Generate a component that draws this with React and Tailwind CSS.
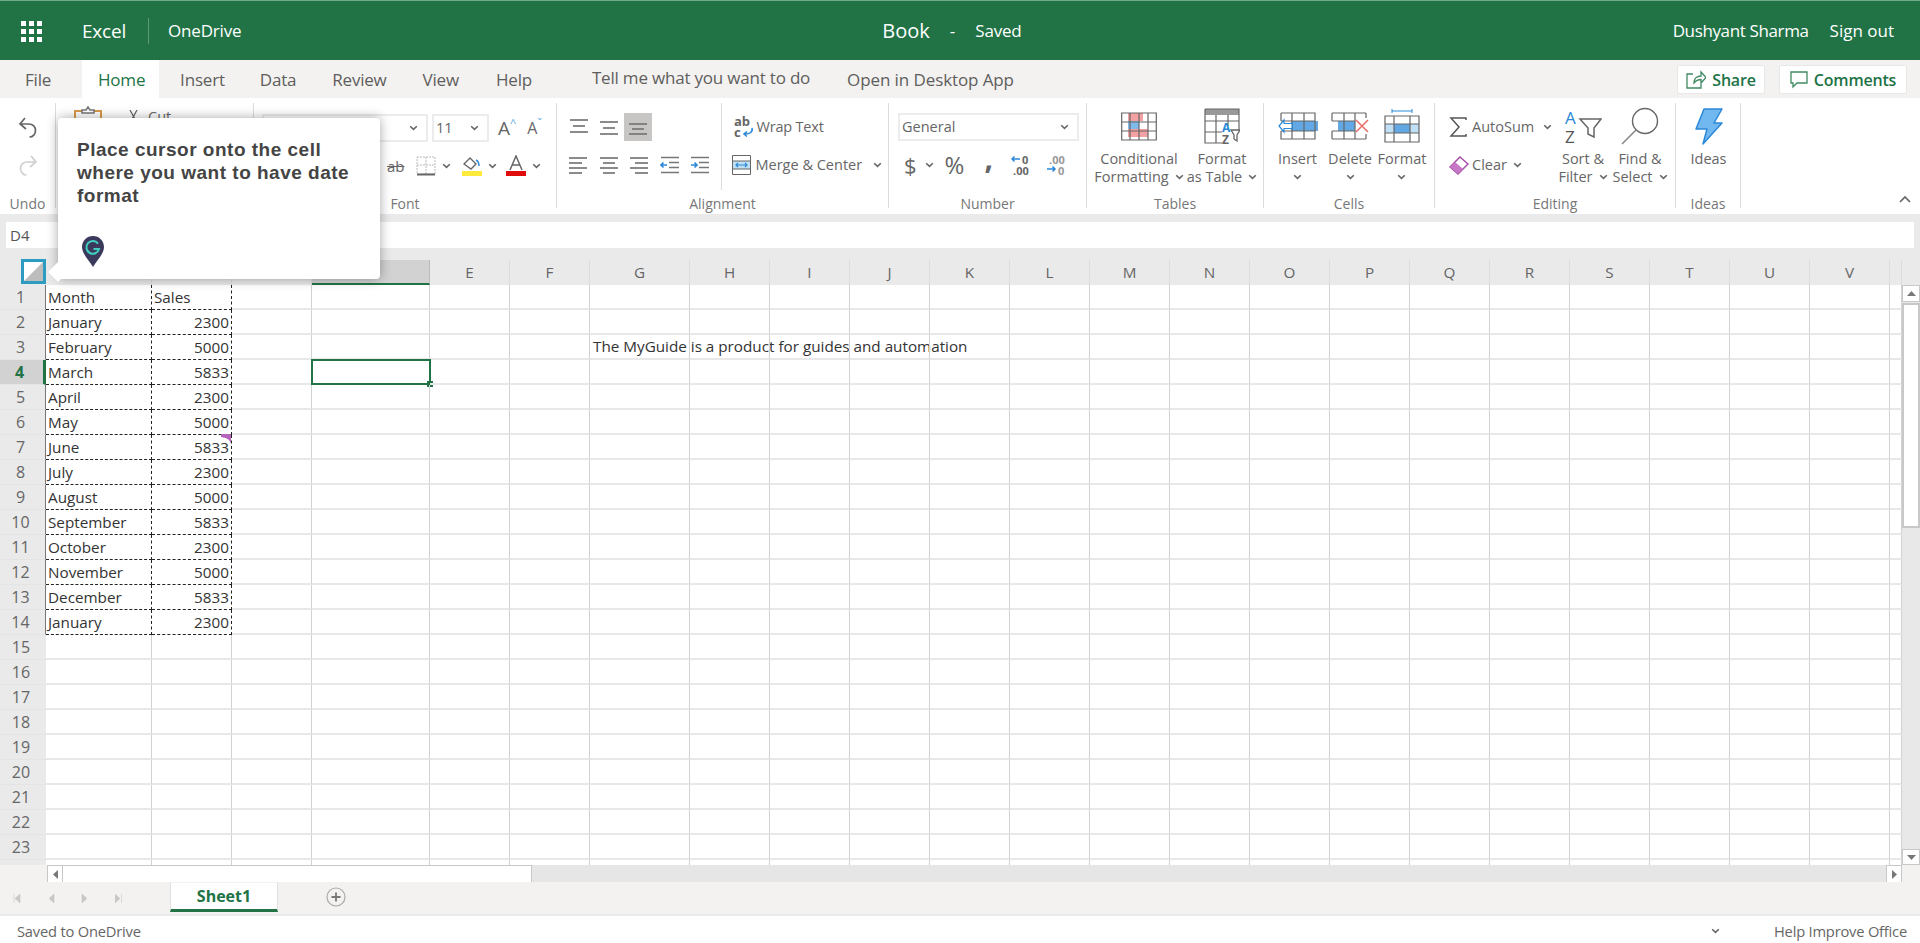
import React from "react";

const cols = [
  ["A", 106], ["B", 80], ["C", 80], ["D", 118], ["E", 80], ["F", 80], ["G", 100], ["H", 80], ["I", 80], ["J", 80], ["K", 80],
  ["L", 80], ["M", 80], ["N", 80], ["O", 80], ["P", 80], ["Q", 80], ["R", 80], ["S", 80], ["T", 80], ["U", 80], ["V", 80], ["W", 12],
];

const sales = [
  ["Month", "Sales"], ["January", "2300"], ["February", "5000"], ["March", "5833"], ["April", "2300"], ["May", "5000"], ["June", "5833"],
  ["July", "2300"], ["August", "5000"], ["September", "5833"], ["October", "2300"], ["November", "5000"], ["December", "5833"], ["January", "2300"],
];

const Chevron = ({ className = "" }) => (
  <svg width="9" height="6" viewBox="0 0 9 6" className={className}>
    <path d="M1.2 1.2 4.5 4.4 7.8 1.2" fill="none" stroke="#666" strokeWidth="1.6" />
  </svg>
);

const Lines = ({ widths }) => (
  <svg width="20" height="18" viewBox="0 0 20 18" stroke="#777" strokeWidth="1.7">
    {widths.map((l, i) => <path key={i} d={`M${l[0]} ${l[1]}H${l[2]}`} />)}
  </svg>
);

const Indent = ({ flip }) => (
  <svg width="20" height="18" viewBox="0 0 20 18" fill="none">
    <path d="M1 1.5H19M9 6.5H19M9 11.5H19M1 16.5H19" stroke="#777" strokeWidth="1.7" />
    {flip
      ? <path d="M1 9H7M4.5 6.5 7 9 4.5 11.5" stroke="#2b88d8" strokeWidth="1.6" />
      : <path d="M7 9H1M3.5 6.5 1 9 3.5 11.5" stroke="#2b88d8" strokeWidth="1.6" />}
  </svg>
);

const TableGrid = ({ w = 36, h = 27, children }) => (
  <svg width={w} height={h + 8} viewBox={`0 0 ${w} ${h + 8}`} fill="none">
    {children}
  </svg>
);

const LargeBtn = ({ w, icon, lines, chevron }) => (
  <div className="flex flex-col items-center" style={{ width: w }}>
    <div className="h-[40px] mt-[3px] flex items-center justify-center">{icon}</div>
    <div className="mt-[4px] text-[14.5px] leading-[18px] text-[#666] text-center whitespace-nowrap">
      <div>{lines[0]}</div>
      <div className="flex items-center justify-center gap-[6px] h-[18px]">
        {lines[1] && <span>{lines[1]}</span>}
        {chevron && <Chevron />}
      </div>
    </div>
  </div>
);

const Group = ({ w, label, children, last }) => (
  <div className={`flex flex-col h-[105px] mt-[5px] ${last ? "" : "border-r border-[#dcdcdc]"}`} style={{ width: w }}>
    <div className="flex-1 min-h-0">{children}</div>
    <div className="h-[20px] -mb-[6px] text-[14px] leading-[20px] text-[#777] text-center">{label}</div>
  </div>
);

const SelectBox = ({ className, text }) => (
  <div className={`h-[28px] border-2 border-[#ececec] flex items-center justify-between pl-[2px] pr-[8px] text-[14.5px] text-[#666] ${className}`}>
    <span>{text}</span>
    <Chevron />
  </div>
);

const TooltipPin = () => (
  <svg width="22" height="31" viewBox="0 0 22 31">
    <path d="M11 0C4.9 0 0 4.9 0 11c0 7.2 7.8 14 11 20 3.200-6 11-12.800 11-20C22 4.900 17.100 0 11 0Z" fill="#3b3a5c" />
    <path d="M16 7.600A6.400 6.400 0 1 0 17 13H11.500" fill="none" stroke="#3fd0c0" strokeWidth="2" />
  </svg>
);

function Ribbon() {
  return (
    <div className="h-[116px] bg-white flex">
      <Group w={56} label="Undo">
        <div className="flex flex-col items-center pt-[13px] gap-[14px]">
          <svg width="20" height="24" viewBox="0 0 20 24" fill="none" stroke="#666" strokeWidth="1.700">
            <path d="M7 2 2 8l6 5M2 8h9c4 0 6.500 3 6.500 6.500S15 21 11.500 21" />
          </svg>
          <svg width="20" height="24" viewBox="0 0 20 24" fill="none" stroke="#d0d0d0" strokeWidth="1.700">
            <path d="M13 2l5 6-6 5M18 8H9c-4 0-6.500 3-6.500 6.500S5 21 8.500 21" />
          </svg>
        </div>
      </Group>
      <Group w={198} label="Clipboard">
        <div className="flex items-start pl-[18px] pt-[3px] gap-[26px]">
          <svg width="28" height="24" viewBox="0 0 28 24" fill="none">
            <rect x="1" y="5" width="26" height="19" stroke="#d99a4a" strokeWidth="2" />
            <path d="M8 7V4h4l2-3 2 3h4v3Z" fill="#fff" stroke="#777" strokeWidth="1.500" />
          </svg>
          <div className="flex items-center gap-[9px] text-[14.5px] text-[#666]">
            <svg width="11" height="14" viewBox="0 0 11 14" fill="none" stroke="#666" strokeWidth="1.300"><path d="M2 0 8 11M9 0 3 11" /></svg>
            <span>Cut</span>
          </div>
        </div>
      </Group>
      <Group w={303} label="Font">
        <div className="pt-[11px] flex items-center">
          <SelectBox className="w-[166px] ml-[8px]" text="" />
          <SelectBox className="w-[57px] ml-[4px]" text="11" />
          <div className="ml-[9px] text-[19px] leading-[20px] text-[#666] flex items-start">A<span className="text-[11px] leading-[10px] text-[#5aa9dd]">^</span></div>
          <div className="ml-[11px] text-[16px] leading-[20px] text-[#666] flex items-start">A<span className="text-[11px] leading-[10px] text-[#5aa9dd]">ˇ</span></div>
        </div>
        <div className="mt-[10px] flex items-center h-[28px] pl-[133px]">
          <span className="text-[15px] text-[#666] line-through">ab</span>
          <svg className="ml-[11px]" width="20" height="20" viewBox="0 0 20 20" fill="none">
            <path d="M1 1H19V18H1ZM10 1V18M1 9H19" stroke="#bbb" strokeDasharray="2 1" />
            <path d="M1 18.500H19" stroke="#666" strokeWidth="2" />
          </svg>
          <Chevron className="ml-[6px]" />
          <svg className="ml-[10px]" width="22" height="22" viewBox="0 0 22 22" fill="none">
            <path d="M3 9 9 3l6 6-5 5Z" stroke="#666" strokeWidth="1.400" />
            <path d="M15 5c2 1 3 3 3 6" stroke="#2b88d8" strokeWidth="1.500" />
            <rect x="1" y="16" width="20" height="5" fill="#ffeb3b" />
          </svg>
          <Chevron className="ml-[5px]" />
          <svg className="ml-[8px]" width="22" height="22" viewBox="0 0 22 22" fill="none">
            <path d="M5 15 11 1l6 14M7.500 10H14.500" stroke="#666" strokeWidth="1.500" />
            <rect x="1" y="16" width="20" height="5" fill="#e00c0c" />
          </svg>
          <Chevron className="ml-[5px]" />
        </div>
      </Group>
      <Group w={332} label="Alignment">
        <div className="flex h-[87px]">
          <div className="w-[164px]">
            <div className="flex items-center h-[28px] mt-[10px] pl-[12px] gap-[10px]">
              <Lines widths={[[1, 2, 19], [4, 8, 16], [1, 14, 19]]} />
              <Lines widths={[[1, 4, 19], [4, 10, 16], [1, 16, 19]]} />
              <div className="w-[28px] h-[28px] -ml-[5px] bg-[#c8c6c4] flex items-center justify-center">
                <Lines widths={[[1, 6, 19], [4, 11, 16], [1, 16, 19]]} />
              </div>
            </div>
            <div className="flex items-center h-[28px] mt-[10px] pl-[11px] gap-[10.5px]">
              <Lines widths={[[1, 2, 19], [1, 7, 14], [1, 12, 19], [1, 17, 14]]} />
              <Lines widths={[[1, 2, 19], [4, 7, 16], [1, 12, 19], [4, 17, 16]]} />
              <Lines widths={[[1, 2, 19], [6, 7, 19], [1, 12, 19], [6, 17, 19]]} />
              <Indent />
              <Indent flip />
            </div>
          </div>
          <div className="w-[168px] border-l border-[#dcdcdc]">
            <div className="flex items-center h-[28px] mt-[10px] pl-[12px] gap-[3px] text-[14.5px] tracking-[-0.2px] text-[#666]">
              <svg width="20" height="22" viewBox="0 0 20 22" fill="none">
                <text x="0" y="10" fontSize="13" fontWeight="700" fill="#666" fontFamily="Open Sans, sans-serif">ab</text>
                <text x="0" y="21" fontSize="13" fontWeight="700" fill="#666" fontFamily="Open Sans, sans-serif">c</text>
                <path d="M18 12c1 4-2 6-7 6M13 15.500 10 18l3 2.500" stroke="#2b88d8" strokeWidth="1.600" />
              </svg>
              <span>Wrap Text</span>
            </div>
            <div className="flex items-center h-[28px] mt-[10px] pl-[10px] gap-[5px] text-[14.5px] text-[#666] whitespace-nowrap">
              <svg width="19" height="20" viewBox="0 0 19 20" fill="none">
                <path d="M.5 .5H18.500V19.500H.5Z" stroke="#666" />
                <rect x="1" y="6" width="17" height="8" fill="#bfe0f5" />
                <path d="M1 6H18M1 14H18" stroke="#666" />
                <path d="M4 10H15M6 8 4 10l2 2M13 8l2 2-2 2" stroke="#2b88d8" strokeWidth="1.200" />
              </svg>
              <span>Merge &amp; Center</span>
              <Chevron className="ml-[6px]" />
            </div>
          </div>
        </div>
      </Group>
      <Group w={198} label="Number">
        <SelectBox className="w-[181px] ml-[9px] mt-[10px]" text="General" />
        <div className="flex items-center h-[28px] mt-[10px] pl-[15px] text-[#666]">
          <span className="text-[22px] leading-[28px]">$</span>
          <Chevron className="ml-[8px]" />
          <span className="ml-[11px] text-[24px] leading-[28px]">%</span>
          <span className="ml-[20px] h-[28px] text-[30px] font-bold leading-[28px] -mt-[14px]">,</span>
          <svg className="ml-[18px]" width="21" height="22" viewBox="0 0 21 22" fill="none" fontFamily="Open Sans, sans-serif">
            <path d="M9 5H1M3.500 2.500 1 5l2.500 2.500" stroke="#2b88d8" strokeWidth="1.500" />
            <text x="11" y="10" fontSize="11" fill="#666" fontWeight="700">0</text>
            <text x="2" y="21" fontSize="11" fill="#666" fontWeight="700">.00</text>
          </svg>
          <svg className="ml-[14px]" width="21" height="22" viewBox="0 0 21 22" fill="none" fontFamily="Open Sans, sans-serif">
            <text x="3" y="10" fontSize="11" fill="#999" fontWeight="700">.00</text>
            <path d="M1 15H9M6.500 12.500 9 15l-2.500 2.500" stroke="#2b88d8" strokeWidth="1.500" />
            <text x="12" y="21" fontSize="11" fill="#999" fontWeight="700">0</text>
          </svg>
        </div>
      </Group>
      <Group w={177} label="Tables">
        <div className="flex pl-[2px]">
          <LargeBtn w={100} chevron lines={["Conditional", "Formatting"]} icon={
            <TableGrid>
              <rect x="7" y="4" width="15" height="8" fill="#f4a1a3" />
              <rect x="7" y="12" width="11" height="8" fill="#7fbaea" />
              <rect x="7" y="20" width="20" height="8" fill="#f4a1a3" />
              <path d="M.7 4H35.300V31H.7ZM.7 13H35.300M.7 22H35.300M9 4V31M18 4V31M27 4V31" stroke="#666" strokeWidth="1.200" />
            </TableGrid>
          } />
          <LargeBtn w={66} chevron lines={["Format", "as Table"]} icon={
            <svg width="36" height="36" viewBox="0 0 36 36" fill="none">
              <rect x="1" y="1" width="34" height="6" fill="#999" />
              <path d="M1 1H35V22M1 1V35H18M12 7V35M24 7V18M1 13H35M1 24H18" stroke="#666" strokeWidth="1.200" />
              <text x="18" y="24" fontSize="12" fontWeight="700" fill="#2b88d8">A</text>
              <text x="18" y="36" fontSize="12" fontWeight="700" fill="#666">Z</text>
              <path d="M27 22H36L33 27V33L30 31V27Z" fill="#fff" stroke="#666" strokeWidth="1.300" />
            </svg>
          } />
        </div>
      </Group>
      <Group w={171} label="Cells">
        <div className="flex pl-[7px]">
          <LargeBtn w={53} chevron lines={["Insert"]} icon={
            <svg width="40" height="28" viewBox="0 0 40 28" fill="none">
              <rect x="13" y="9" width="27" height="10" fill="#62a8e5" />
              <path d="M3 1H37V27H3V19M3 9V1M3 9H37M3 19H37M14 1V27M26 1V27" stroke="#666" strokeWidth="1.200" />
              <path d="M14 11.500H6V8L1 14l5 6v-3.500H14Z" fill="#fff" stroke="#2b88d8" strokeWidth="1.200" />
            </svg>
          } />
          <LargeBtn w={52} chevron lines={["Delete"]} icon={
            <svg width="38" height="28" viewBox="0 0 38 28" fill="none">
              <rect x="7" y="9" width="17" height="10" fill="#62a8e5" />
              <path d="M1 1H35M1 27H35M1 9H24M1 19H24M1 1V9M1 19V27M35 1V6M35 22V27M13 1V27M24 1V27" stroke="#666" strokeWidth="1.200" />
              <path d="M25 8 37 20M37 8 25 20" stroke="#e8716e" strokeWidth="1.600" />
            </svg>
          } />
          <LargeBtn w={52} chevron lines={["Format"]} icon={
            <svg width="36" height="34" viewBox="0 0 36 34" fill="none">
              <path d="M8 2H28M8 0V4M28 0V4" stroke="#2b88d8" />
              <rect x="1" y="15" width="34" height="9" fill="#bfe0f5" />
              <rect x="10" y="15" width="16" height="9" fill="#62a8e5" />
              <path d="M1 7H35V33H1ZM1 15H35M1 24H35M10 7V33M26 7V33" stroke="#666" strokeWidth="1.200" />
            </svg>
          } />
        </div>
      </Group>
      <Group w={241} label="Editing">
        <div className="flex">
          <div className="w-[118px] pl-[14px] text-[14.5px] text-[#666]">
            <div className="flex items-center h-[28px] mt-[10px]">
              <svg width="18" height="20" viewBox="0 0 18 20" fill="none"><path d="M17 3V1H2L10 10 2 19H17V17" stroke="#555" strokeWidth="1.500" /></svg>
              <span className="ml-[5px]">AutoSum</span>
              <Chevron className="ml-[9px]" />
            </div>
            <div className="flex items-center h-[28px] mt-[10px]">
              <svg width="20" height="20" viewBox="0 0 20 20"><path d="M1 12 11 2l8 7-10 10Z" fill="#fff" stroke="#a64ea6" strokeWidth="1.500" /><path d="M1 12l5-5 8 7-5 5Z" fill="#c678c6" /></svg>
              <span className="ml-[3px]">Clear</span>
              <Chevron className="ml-[6px]" />
            </div>
          </div>
          <LargeBtn w={60} chevron lines={["Sort &", "Filter"]} icon={
            <svg width="37" height="35" viewBox="0 0 37 35" fill="none">
              <text x="0" y="15" fontSize="17" fill="#2b88d8" fontFamily="Open Sans, sans-serif">A</text>
              <text x="0" y="34" fontSize="17" fill="#555" fontFamily="Open Sans, sans-serif">Z</text>
              <path d="M15 10H36L29 19V28L23 25V19Z" stroke="#666" strokeWidth="1.500" />
            </svg>
          } />
          <LargeBtn w={54} chevron lines={["Find &", "Select"]} icon={
            <svg width="38" height="38" viewBox="0 0 38 38" fill="none">
              <circle cx="24" cy="14" r="12.500" stroke="#666" strokeWidth="1.400" />
              <path d="M15 23 1 37" stroke="#888" strokeWidth="1.600" />
            </svg>
          } />
        </div>
      </Group>
      <Group w={65} label="Ideas">
        <LargeBtn w={65} lines={["Ideas"]} icon={
          <svg width="28" height="37" viewBox="0 0 28 37">
            <path d="M9 1H27L19 15H27L8 36 12 21H1Z" fill="#71b7f0" stroke="#2b88d8" strokeWidth="1.500" strokeLinejoin="round" />
          </svg>
        } />
      </Group>
      <div className="flex-1 flex items-end justify-end pr-[9px] pb-[11px]">
        <svg width="12" height="8" viewBox="0 0 12 8"><path d="M1 7 6 2l5 5" fill="none" stroke="#666" strokeWidth="1.700" /></svg>
      </div>
    </div>
  );
}

function Sheet() {
  const rows = Array.from({ length: 24 }, (_, i) => i);
  return (
    <div className="flex h-[580px] bg-white">
      <div className="w-[1902px] overflow-hidden">
        {rows.map((r) => (
          <div key={r} className="flex h-[25px]">
            <div className={`w-[46px] shrink-0 flex items-center justify-center pr-[4px] text-[16px] border-b border-[#e4e4e4] ${r === 3 ? "bg-[#d2d2d2] text-[#217346] font-bold border-r-[3px] border-r-[#217346]" : r < 14 ? "bg-[#eaeaea] text-[#666] border-r border-r-[#777]" : "bg-[#eaeaea] text-[#666]"}`}>
              {r + 1}
            </div>
            {cols.map(([letter, w], c) => {
              const dashed = r < 14 && c < 2;
              const row = sales[r];
              return (
                <div
                  key={letter}
                  className={`relative shrink-0 flex items-center text-[15.25px] text-[#333] whitespace-nowrap ${dashed ? "border-b border-r border-dashed border-[#222]" : "border-b-2 border-b-[#e8e8e8] border-r border-r-[#d2d2d2]"}`}
                  style={{ width: w }}
                >
                  {dashed && c === 0 && <span className="pl-[2px]">{row[0]}</span>}
                  {dashed && c === 1 && r === 0 && <span className="pl-[2px]">{row[1]}</span>}
                  {dashed && c === 1 && r > 0 && <span className="ml-auto pr-[2px]">{row[1]}</span>}
                  {r === 2 && letter === "G" && <span className="pl-[3px]">The MyGuide is a product for guides and automation</span>}
                  {r === 3 && letter === "D" && (
                    <div className="absolute -left-[1px] -top-[1px] w-[120px] h-[26px] border-2 border-[#217346]">
                      <div className="absolute -right-[4px] -bottom-[4px] w-[6px] h-[6px] bg-[#217346]" />
                    </div>
                  )}
                  {r === 5 && letter === "B" && (
                    <svg className="absolute right-0 -bottom-[11px]" width="10" height="11" viewBox="0 0 10 11">
                      <path d="M0 0H10V10C9 5 5 4 0 3Z" fill="#b565bb" />
                    </svg>
                  )}
                </div>
              );
            })}
          </div>
        ))}
      </div>
      <div className="w-[18px] bg-[#e8e8e8] flex flex-col">
        <div className="h-[17px] bg-white border border-[#c8c8c8] flex items-center justify-center">
          <svg width="9" height="5" viewBox="0 0 9 5"><path d="M4.500 0 9 5H0Z" fill="#777" /></svg>
        </div>
        <div className="h-[225px] mt-[1px] bg-white border-2 border-[#c8c8c8]" />
        <div className="flex-1" />
        <div className="h-[16px] bg-white border border-[#c8c8c8] flex items-center justify-center">
          <svg width="9" height="5" viewBox="0 0 9 5"><path d="M4.500 5 9 0H0Z" fill="#777" /></svg>
        </div>
      </div>
    </div>
  );
}

export default function App() {
  return (
    <div className="relative w-[1920px] h-[943px] overflow-hidden bg-white flex flex-col font-['Open_Sans',sans-serif]">
      {/* title bar */}
      <div className="h-[60px] bg-[#217346] border-t border-[#6fa88a] flex items-center pt-[1px] text-white">
        <svg className="ml-[21px]" width="21" height="21" viewBox="0 0 21 21" fill="#fff">
          {[0, 8, 16].map((x) => [0, 8, 16].map((y) => <rect key={`${x}-${y}`} x={x} y={y} width="5" height="5" />))}
        </svg>
        <span className="ml-[40px] text-[19px] tracking-[-0.2px]">Excel</span>
        <div className="ml-[22px] w-px h-[26px] bg-[#5c9a78]" />
        <span className="ml-[19px] text-[17px] tracking-[-0.2px]">OneDrive</span>
        <span className="ml-[641px] text-[20px]">Book</span>
        <span className="ml-[20px] text-[17px]">-</span>
        <span className="ml-[20px] text-[17px] tracking-[-0.2px]">Saved</span>
        <span className="ml-auto text-[17px] tracking-[-0.37px]">Dushyant Sharma</span>
        <span className="ml-[21px] mr-[26px] text-[17px]">Sign out</span>
      </div>

      {/* tabs */}
      <div className="h-[38px] bg-[#f3f2f1] flex items-center text-[17px] tracking-[-0.2px] text-[#605e5c]">
        <span className="ml-[25px] pt-[2px]">File</span>
        <div className="ml-[31px] w-[77px] h-full pt-[2px] pl-[2px] bg-white text-[#217346] flex items-center justify-center">Home</div>
        <span className="ml-[21px] pt-[2px]">Insert</span>
        <span className="ml-[35px] pt-[2px]">Data</span>
        <span className="ml-[36px] pt-[2px]">Review</span>
        <span className="ml-[36px] pt-[2px]">View</span>
        <span className="ml-[37px] pt-[2px]">Help</span>
        <span className="ml-[60px] -mt-[2px]">Tell me what you want to do</span>
        <span className="ml-[37px] pt-[2px] tracking-[-0.1px]">Open in Desktop App</span>
        <div className="ml-auto mt-[1px] h-[29px] w-[88px] bg-white border border-[#e8e8e8] rounded-[2px] flex items-center justify-center gap-[6px] text-[#217346] font-semibold text-[16px]">
          <svg width="20" height="19" viewBox="0 0 20 19" fill="none" stroke="#3f8a63" strokeWidth="1.300">
            <path d="M7 4H1V18H15V11M8 13c0-5 3-7 7-7V2l5 5.500L15 13V9.500c-3 0-5 1-7 3.500Z" />
          </svg>
          Share
        </div>
        <div className="ml-[14px] mr-[13px] mt-[1px] h-[29px] w-[128px] bg-white border border-[#e8e8e8] rounded-[2px] flex items-center justify-center gap-[6px] text-[#217346] font-semibold text-[16px]">
          <svg width="18" height="18" viewBox="0 0 18 18" fill="none" stroke="#3f8a63" strokeWidth="1.300">
            <path d="M1 1H17V12H7L3 16V12H1Z" />
          </svg>
          Comments
        </div>
      </div>

      <Ribbon />

      {/* formula bar */}
      <div className="h-[46px] bg-[#eaeaea] pt-[8px] pl-[6px] pr-[6px]">
        <div className="h-[26px] bg-white flex items-center pl-[4px] text-[15px] text-[#555]">D4</div>
      </div>

      {/* column headers */}
      <div className="h-[25px] bg-[#eaeaea] flex">
        <div className="w-[46px] shrink-0 pl-[21px]">
          <div className="w-[25px] h-[25px] -mt-[1px] border-[3px] border-[#2d9cc0] bg-white">
            <svg width="19" height="19" viewBox="0 0 19 19" className="block"><path d="M19 0V19H0Z" fill="#bdbdbd" /></svg>
          </div>
        </div>
        {cols.map(([letter, w]) => (
          <div
            key={letter}
            className={`shrink-0 flex items-center justify-center text-[15.25px] text-[#666] border-r ${letter === "D" ? "bg-[#d2d2d2] border-b-2 border-b-[#217346] border-r-[#bbb]" : "border-r-[#dcdcdc]"}`}
            style={{ width: w }}
          >
            {letter === "W" ? "" : letter}
          </div>
        ))}
      </div>

      <Sheet />

      {/* horizontal scrollbar */}
      <div className="h-[17px] bg-[#f3f2f1] flex pl-[47px]">
        <div className="w-[16px] bg-white border-x border-t border-[#c8c8c8] flex items-center justify-center">
          <svg width="5" height="9" viewBox="0 0 5 9"><path d="M0 4.500 5 0V9Z" fill="#777" /></svg>
        </div>
        <div className="w-[469px] bg-white border-t border-r border-[#c8c8c8]" />
        <div className="w-[1354px] bg-[#e6e6e6]" />
        <div className="w-[16px] bg-white border-x border-t border-[#c8c8c8] flex items-center justify-center">
          <svg width="5" height="9" viewBox="0 0 5 9"><path d="M5 4.500 0 0V9Z" fill="#777" /></svg>
        </div>
      </div>

      {/* sheet tabs */}
      <div className="h-[32px] bg-[#f3f2f1] flex items-start">
        <div className="flex items-center h-full w-[170px] pl-[13px] gap-[26px]">
          {["M1 0V9M7 0 2 4.500 7 9Z", "M7 0 2 4.500 7 9Z", "M1 0 6 4.500 1 9Z", "M0 0 5 4.500 0 9ZM6.500 0V9"].map((d) => (
            <svg key={d} width="8" height="9" viewBox="0 0 8 9">
              <path d={d} fill="#c8c8c8" stroke="#c8c8c8" strokeWidth=".6" />
            </svg>
          ))}
        </div>
        <div className="w-[108px] h-[29px] mt-[1px] bg-white border-x border-[#e0e0e0] border-b-[3px] border-b-[#217346] flex items-center justify-center text-[16px] font-bold text-[#217346]">Sheet1</div>
        <svg className="ml-[48px] mt-[5px]" width="20" height="20" viewBox="0 0 20 20" fill="none">
          <circle cx="10" cy="10" r="9" stroke="#aaa" strokeWidth="1.200" />
          <path d="M10 5.500V14.500M5.500 10H14.500" stroke="#777" strokeWidth="1.800" />
        </svg>
      </div>

      {/* status bar */}
      <div className="flex-1 bg-white border-t-2 border-[#eaeaea] flex items-center pt-[3px] text-[14.7px] tracking-[-0.2px] text-[#666]">
        <span className="ml-[17px]">Saved to OneDrive</span>
        <Chevron className="ml-auto" />
        <span className="ml-[54px] mr-[13px]">Help Improve Office</span>
      </div>

      {/* guide tooltip */}
      <div className="absolute left-[58px] top-[118px] w-[322px] h-[161px] bg-white rounded-[4px] shadow-[0_0_12px_rgba(0,0,0,0.35)] pl-[19px] pt-[20px] font-['Liberation_Sans',sans-serif]">
        <div className="absolute -left-[7px] top-[147px] w-[14px] h-[14px] bg-white rotate-45" />
        <p className="text-[19px] leading-[23px] font-bold text-[#444] tracking-[0.5px] w-[290px]">Place cursor onto the cell where you want to have date format</p>
        <div className="mt-[29px] ml-[5px]"><TooltipPin /></div>
      </div>
    </div>
  );
}
